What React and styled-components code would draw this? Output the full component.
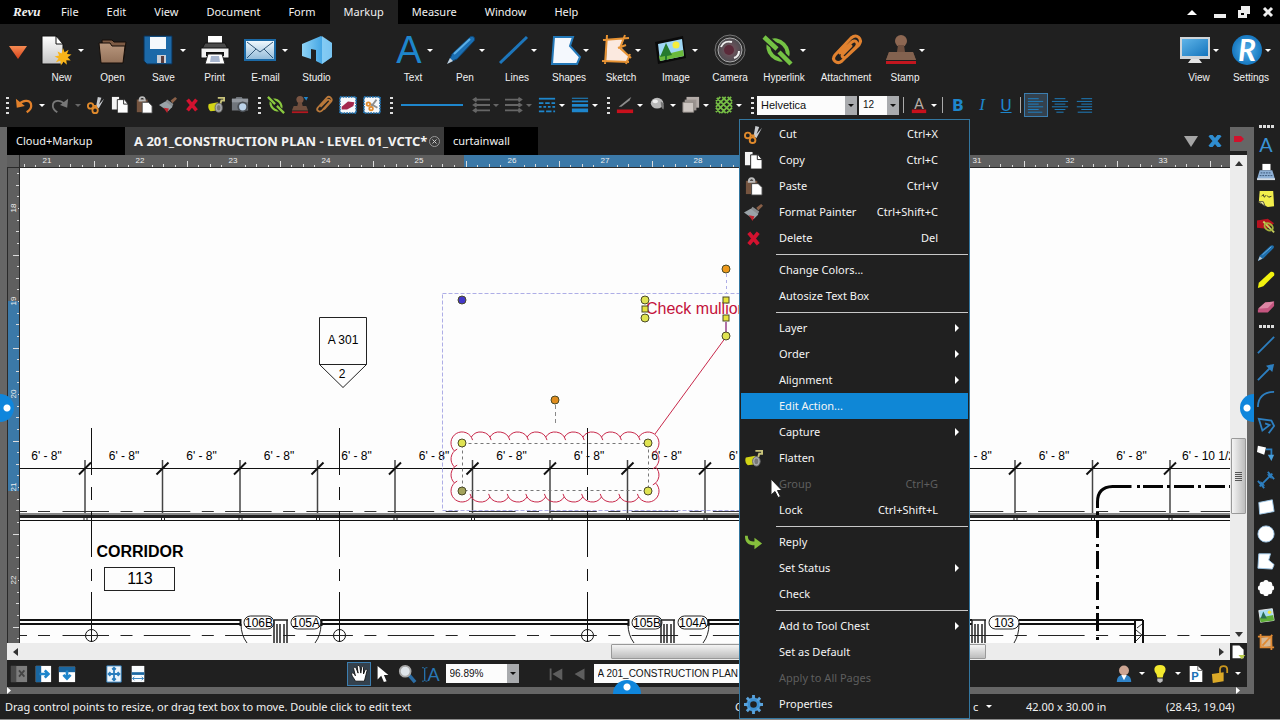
import React from 'react';
import styled, { createGlobalStyle, css } from 'styled-components';

const BLUE = '#1e86cc';
const DARK = '#202020';
const RAIL = '#666666';

/* ---------- large toolbar icons, 32 x 32 ---------- */

const bigIcons = {
  new: (
    <>
      <path d="M2 2h15l6 8v20H2z" fill="url(#paper)" stroke="#111" />
      <path d="M16 2v8h7z" fill="#fff" stroke="#111" />
      <path d="M23 14l1.6 4.2 4-2.4-1.6 4.2 4.5.6-3.8 2.6 3 3.4-4.4-.4.6 4.6-3.4-3-2.6 3.6-.6-4.6-4.4 1.4 2.6-3.8-4-2 4.6-.8-1.6-4.2 4 2.2z" fill="#f9b418" />
    </>
  ),
  open: (
    <>
      <path d="M5 6h10l2 2h12l-3 20H6z" fill="#7d5b44" stroke="#140d08" />
      <path d="M2 9h11l2 3h13l-2 17H4z" fill="url(#folder)" stroke="#140d08" />
    </>
  ),
  save: (
    <>
      <path d="M2 2h28v28H5l-3-3z" fill="#1c69a8" stroke="#0b2f50" />
      <path d="M8 3h16v12H8z" fill="#f4f8fc" />
      <path d="M9 21h15v8H9z" fill="#c9ced6" />
      <path d="M19 22h3v7h-3z" fill="#5a3c3c" />
      <path d="M9 21h6v8H9z" fill="#1c69a8" />
    </>
  ),
  print: (
    <>
      <path d="M9 2h14v8H9z" fill="#fff" />
      <path d="M6 9h20l3 6H3z" fill="#4b4b4b" stroke="#111" />
      <path d="M2 14h28v10H2z" fill="#f2f2f2" stroke="#111" />
      <path d="M7 18h18v4H7z" fill="#111" />
      <path d="M9 20h14l3 10H6z" fill="#fff" stroke="#222" />
      <path d="M12 22h8l1 6h-10z" fill="#a8b6cf" />
    </>
  ),
  email: (
    <>
      <path d="M1 6h30v20H1z" fill="url(#mail)" stroke="#1c6aa6" strokeWidth="2" />
      <path d="M3 8l13 10L29 8M3 24l9-9M29 24l-9-9" fill="none" stroke="#33597a" />
    </>
  ),
  studio: (
    <>
      <path d="M1 10L20 2l11 7v14l-10 7-6-3V16l-5-1v10l-9-3z" fill="url(#sky)" />
      <path d="M21 2l10 7v14l-10 7z" fill="#9fdcfb" opacity=".7" />
    </>
  ),
  text: (
    <text x="16" y="29" textAnchor="middle" fontFamily="Liberation Sans, Arial, sans-serif" fontSize="38" fill={BLUE}>A</text>
  ),
  pen: (
    <>
      <path d="M3 29l4-9L25 3c3-2 6 1 4 4L12 25z" fill="#1b6fb3" stroke="#0d4471" />
      <path d="M9 20L25 5" stroke="#5aaee6" strokeWidth="2" />
      <path d="M2 30l3-6 3 3z" fill="#c9d3dc" />
    </>
  ),
  lines: <path d="M3 29L30 3" stroke="#1d76bb" strokeWidth="3" />,
  shapes: <path d="M5 3h19l-3 9 10 11-3 7H3z" fill="#f4f8fd" stroke="#2378b8" strokeWidth="2" />,
  sketch: (
    <>
      <path d="M6 5h17l-3 8 8 9-3 6H5z" fill="#fbe9df" />
      <path d="M2 6l26-2M6 1l-2 29M1 27l27 1M24 1l-5 13 11 10M29 20l-4 10M17 14l8-3" fill="none" stroke="#e79334" strokeWidth="2" />
    </>
  ),
  image: (
    <>
      <path d="M1 8l28-6 3 22-28 6z" fill="#0a0a0a" />
      <path d="M4 10l24-5 2 17-24 5z" fill="#9fd7f5" />
      <path d="M5 22l24-6 1 6-24 5z" fill="#6ab93c" />
      <circle cx="22" cy="11" r="3.5" fill="#f5ee3c" />
      <path d="M12 9l6 12-5 1v4h-2v-4l-5 1z" fill="#257a2e" />
    </>
  ),
  camera: (
    <>
      <circle cx="16" cy="16" r="15" fill="#2b2b2b" stroke="#777" />
      <circle cx="16" cy="16" r="12" fill="url(#lens)" stroke="#aaa" />
      <circle cx="15" cy="16" r="5" fill="#5b2a3a" />
      <path d="M7 13c2-5 7-6 11-5M20 24c3-1 5-4 5-7" fill="none" stroke="#eee" strokeWidth="2" />
    </>
  ),
  hyperlink: (
    <g fill="none" stroke="#74c244">
      <ellipse cx="16" cy="16" rx="11" ry="8" transform="rotate(45 16 16)" strokeWidth="4" />
      <path d="M2 3l14 12M16 17l13 13" stroke={DARK} strokeWidth="8" />
      <path d="M2 3l13 12M17 18l12 12" strokeWidth="4.5" />
    </g>
  ),
  attachment: (
    <g fill="none" stroke="#e0812f" strokeWidth="3" strokeLinecap="round">
      <path d="M10 19L22 8c4-3 7 2 4 5L12 27c-5 4-11-1-7-6L21 4c6-5 12 1 8 7L16 23c-3 2-5-1-3-3l8-8" />
    </g>
  ),
  stamp: (
    <>
      <circle cx="16" cy="7" r="6" fill="#8d6752" />
      <path d="M13 11h6l1 7h8l3 8H1l3-8h8z" fill="#6f5040" />
      <path d="M4 18h24l3 8H1z" fill="#83624f" />
      <path d="M1 27h30v3H1z" fill="#c3161f" />
    </>
  ),
  view: (
    <>
      <path d="M1 3h30v22H1z" fill="#cfd4d8" />
      <path d="M3 5h26v17H3z" fill="url(#screen)" />
      <path d="M12 25h8l3 4H9z" fill="#e4e4e4" />
    </>
  ),
  settings: (
    <>
      <circle cx="16" cy="16" r="15" fill="url(#ball)" />
      <text x="16" y="27" textAnchor="middle" fontFamily="Lato, sans-serif" fontStyle="italic" fontWeight="700" fontSize="30" fill="#fff">R</text>
    </>
  ),
};

/* ---------- small icons, 20 x 20 ---------- */

const picture = (
  <>
    <path d="M2 5l15-2 2 13-15 2z" fill="#a9dcf2" stroke="#eee" />
    <path d="M3 13l15-3 1 6-15 2z" fill="#5fae38" />
    <circle cx="14" cy="7" r="2" fill="#f3e93c" />
    <path d="M7 6l4 8H4z" fill="#2c6f53" />
  </>
);

const icons = {
  undo: (
    <>
      <path d="M5 9c4-5 13-5 13 2 0 3-2 5-5 7" fill="none" stroke="#e2812b" strokeWidth="2.5" />
      <path d="M1 3l1 10 9-2z" fill="#e2812b" />
    </>
  ),
  redo: (
    <>
      <path d="M15 9C11 4 2 4 2 11c0 3 2 5 5 7" fill="none" stroke="#777" strokeWidth="2" />
      <path d="M19 3l-1 10-8-3z" fill="#777" />
    </>
  ),
  cut: (
    <>
      <path d="M12 1l-2 11 2 1 4-11zM19 3l-8 9 2 2z" fill="#c9ccd0" />
      <circle cx="4" cy="11" r="3" fill="none" stroke="#e08a2c" strokeWidth="2" />
      <circle cx="9" cy="16" r="3" fill="none" stroke="#e08a2c" strokeWidth="2" />
      <path d="M7 11l4 0M9 13l2-2" stroke="#e08a2c" strokeWidth="2" />
    </>
  ),
  copy: (
    <>
      <path d="M1 1h8v14H1z" fill="#f4f4f4" />
      <path d="M7 4h8l4 5v10H7z" fill="#fff" stroke="#222" />
      <path d="M14 4v5h5" fill="none" stroke="#222" />
    </>
  ),
  paste: (
    <>
      <path d="M2 4h12v14H2z" fill="#75543f" />
      <path d="M5 5c0-5 6-5 6 0z" fill="none" stroke="#bbb" strokeWidth="2" />
      <path d="M8 7h7l4 4v8H8z" fill="#fff" stroke="#444" />
    </>
  ),
  painter: (
    <>
      <path d="M13 5l5-4 2 2-5 5z" fill="#8a6048" />
      <path d="M9 4l7 5-2 4-8-5z" fill="#8b8f92" />
      <path d="M7 6l8 6-5 5L0 10z" fill="#9aa3a8" />
      <path d="M5 13l6 1-2 5z" fill="#c0252f" />
    </>
  ),
  del: <path d="M5 4l10 12M15 4L5 16" stroke="#d3122f" strokeWidth="4" />,
  flatten: (
    <>
      <path d="M12 2h7v3h-3l-2 7" fill="none" stroke="#c8c37a" strokeWidth="2" />
      <path d="M2 9l10-2v9l-8 1c-3-2-3-6-2-8z" fill="#d2d416" />
      <ellipse cx="13" cy="13" rx="4" ry="5" fill="#a9abae" stroke="#666" />
      <ellipse cx="13" cy="13" rx="2" ry="3" fill="#777" />
    </>
  ),
  snapshot: (
    <>
      <path d="M1 3h4l1-2h6l1 2h6v13H1z" fill="#70757b" />
      <path d="M1 3h18v4H1z" fill="#9499a0" />
      <circle cx="13" cy="12" r="5" fill="#bcd3ea" stroke="#4a4f55" strokeWidth="2" />
    </>
  ),
  link: (
    <g fill="none" stroke="#8ac93f">
      <ellipse cx="10" cy="10" rx="7" ry="5" transform="rotate(45 10 10)" strokeWidth="2.5" />
      <path d="M1 1l9 8M10 11l9 8" stroke={DARK} strokeWidth="5" />
      <path d="M1 1l8 8M11 11l8 8" strokeWidth="2.5" />
    </g>
  ),
  stampSmall: (
    <>
      <circle cx="10" cy="4" r="4" fill="#7a5543" />
      <path d="M8 7h4l1 4h4l2 5H1l2-5h4z" fill="#6f4e3d" />
      <path d="M1 17h18v2H1z" fill="#b31820" />
      <path d="M14 1h5l-2 4z" fill={BLUE} />
    </>
  ),
  clip: <path d="M6 12l7-7c2-2 5 0 3 2l-8 9c-3 3-7 0-5-3L13 2c3-3 7 1 5 4l-8 9" fill="none" stroke="#b9783a" strokeWidth="2" />,
  eraseSnap: (
    <>
      <path d="M1 1h18v18H1z" fill="#f6f8fa" stroke="#1d6aa5" strokeWidth="2" strokeDasharray="2 1" />
      <path d="M3 12l7-6 7 1-1 4-7 4-6 0z" fill="#a3274c" />
    </>
  ),
  cutSnap: (
    <>
      <path d="M1 1h18v18H1z" fill="#f6f8fa" stroke="#1d6aa5" strokeWidth="2" strokeDasharray="2 1" />
      <path d="M9 12l6-8M9 9l7 4" stroke="#8d8d8d" strokeWidth="2" />
      <circle cx="6" cy="9" r="2" fill="none" stroke="#e08a2c" strokeWidth="2" />
      <circle cx="9" cy="14" r="2" fill="none" stroke="#e08a2c" strokeWidth="2" />
    </>
  ),
  lineStart: <path d="M2 4h18M2 10h18M2 16h18M5 2L2 4l3 2M5 8l-3 2 3 2M5 14l-3 2 3 2" fill="none" stroke="#666" strokeWidth="2" />,
  lineEnd: <path d="M0 4h18M0 10h18M0 16h18M15 2l3 2-3 2M15 8l3 2-3 2M15 14l3 2-3 2" fill="none" stroke="#666" strokeWidth="2" />,
  dash: (
    <g stroke={BLUE} fill="none">
      <path d="M1 3h18" strokeWidth="2" />
      <path d="M1 8h18" strokeWidth="2" strokeDasharray="5 2" />
      <path d="M1 12h18" strokeWidth="2" strokeDasharray="3 2" />
      <path d="M1 17h18" strokeWidth="2" strokeDasharray="6 2" />
    </g>
  ),
  weight: (
    <g fill={BLUE}>
      <path d="M1 2h18v1H1zM1 5h18v2H1zM1 9h18v3H1zM1 14h18v4H1z" />
    </g>
  ),
  lineColor: (
    <>
      <path d="M3 12L14 3l3-2-2 4-9 7z" fill="#8c8c8c" />
      <path d="M1 15h18v4H1z" fill="#c8101c" />
    </>
  ),
  fill: (
    <>
      <ellipse cx="9" cy="8" rx="7" ry="6" fill="#b9b9b9" />
      <ellipse cx="7" cy="6" rx="3" ry="2" fill="#eee" />
      <path d="M13 6c4 1 4 6 3 9-2-1-3-4-3-9z" fill="#777" />
    </>
  ),
  opacity: (
    <>
      <path d="M5 1h14v12H5z" fill="#b4aca8" />
      <path d="M3 4h13v12H3z" fill="#9c9490" />
      <path d="M1 7h12v11H1z" fill="#cdc6c2" stroke="#8b8480" />
    </>
  ),
  hatch: <path d="M1 6l5-5M1 12L12 1M1 18L18 1M7 19L19 7M13 19l6-6M14 1l5 5M8 1l11 11M2 2l16 16M1 7l11 12M1 13l5 6" stroke="#76bd45" strokeWidth="2" />,
  fontColor: (
    <>
      <text x="10" y="14" textAnchor="middle" fontFamily="Roboto, sans-serif" fontSize="17" fill="#b9aea6">A</text>
      <path d="M2 15h16v4H2z" fill="#c8101c" />
    </>
  ),
  alignL: <path d="M1 3h12M1 6h17M1 9h12M1 12h17M1 15h12M1 18h16" stroke={BLUE} />,
  alignC: <path d="M4 3h12M1 6h18M4 9h12M1 12h18M4 15h12M6 18h8" stroke={BLUE} />,
  alignR: <path d="M7 3h12M2 6h17M7 9h12M2 12h17M7 15h12M3 18h16" stroke={BLUE} />,
  reply: <path d="M1 3h3c0 5 3 6 7 6V5l8 6-8 6v-4C5 13 1 11 1 3z" fill="#86bf3c" />,
  gear: (
    <>
      <circle cx="10" cy="10" r="5.5" fill="none" stroke="#3d8fd0" strokeWidth="4" />
      <path d="M10 0v4M10 16v4M0 10h4M16 10h4M3 3l3 3M14 14l3 3M3 17l3-3M14 6l3-3" stroke="#5aa3dc" strokeWidth="3" />
    </>
  ),
  letterA: <text x="10" y="18" textAnchor="middle" fontFamily="Lato, sans-serif" fontSize="22" fill="#3a92d6">A</text>,
  typewriter: (
    <>
      <path d="M6 1h9v7H6z" fill="#fff" />
      <path d="M3 8h14l3 10H0z" fill="#8fb1d6" />
      <path d="M4 11h12M3 14h14" stroke="#34506f" strokeDasharray="2 1" />
      <path d="M0 17h20v2H0z" fill="#d3dbe4" />
    </>
  ),
  note: (
    <>
      <path d="M3 1h15l1 17-7 1-10-5z" fill="#f2ee4c" />
      <path d="M2 13l5 0 2 5z" fill="#fffba4" stroke="#444" />
      <path d="M5 7l2-2 1 3 2-2M11 6l2 2 3-1" fill="none" stroke="#222" />
    </>
  ),
  redLink: (
    <>
      <path d="M0 4l12-2 7 5-8 6-11-1z" fill="#b81220" />
      <path d="M7 5l12 12" stroke="#c8d060" strokeWidth="2" />
      <ellipse cx="13" cy="11" rx="5" ry="3.5" transform="rotate(35 13 11)" fill="none" stroke="#a5b23a" strokeWidth="2" />
    </>
  ),
  penSmall: (
    <>
      <path d="M1 19l2-6L15 2c3-2 5 1 3 3L7 16z" fill="#1f6fad" />
      <path d="M6 12L16 3" stroke="#6fb6e6" />
      <path d="M1 19l2-5 3 2z" fill="#b8c4cc" />
    </>
  ),
  highlighter: <path d="M1 19l1-6L15 1c3-1 5 1 4 4L7 17z" fill="#f2f20f" />,
  eraser: (
    <>
      <path d="M1 13l8-8 10-1v5l-7 7H1z" fill="#c4557f" />
      <path d="M1 12l8-7 10-1-7 7z" fill="#dd86a4" />
    </>
  ),
  line: <path d="M1 19L19 1" stroke="#2d7fc0" strokeWidth="2" />,
  arrow: (
    <>
      <path d="M1 19L15 5" stroke="#2d7fc0" strokeWidth="2" />
      <path d="M19 1l-2 9-7-7z" fill="#2d7fc0" />
    </>
  ),
  arc: <path d="M1 19C1 8 8 2 19 2" fill="none" stroke="#2d7fc0" strokeWidth="2" />,
  polyline: <path d="M13 18l6-8-3-6L2 2l4 13 8-6-5-2" fill="none" stroke="#2d7fc0" strokeWidth="2" />,
  callout: (
    <>
      <path d="M1 2l9 2-2 8-8-3z" fill="#fff" />
      <path d="M10 6h6v8" fill="none" stroke="#2d7fc0" strokeWidth="2" />
      <path d="M12 12h7l-3 7z" fill="#4aa0dc" />
    </>
  ),
  dimension: (
    <>
      <path d="M3 17L17 3M1 11l7 8M12 1l7 8" stroke="#2d7fc0" strokeWidth="2" />
      <path d="M3 17l1-6 5 5zM17 3l-1 6-5-5z" fill="#2d7fc0" />
    </>
  ),
  rect: <path d="M2 5l15-3 2 13-16 3z" fill="#fff" stroke="#9cc6e8" />,
  circle: <circle cx="10" cy="10" r="9" fill="#fff" stroke="#9cc6e8" />,
  polygon: <path d="M2 2h13l-2 7 6 5-2 5-16-1z" fill="#fff" stroke="#9cc6e8" />,
  cloud: (
    <g fill="#fff">
      <circle cx="10" cy="10" r="6" />
      <circle cx="10" cy="4" r="3" />
      <circle cx="10" cy="16" r="3" />
      <circle cx="4" cy="10" r="3" />
      <circle cx="16" cy="10" r="3" />
      <circle cx="6" cy="6" r="3" />
      <circle cx="14" cy="6" r="3" />
      <circle cx="6" cy="14" r="3" />
      <circle cx="14" cy="14" r="3" />
    </g>
  ),
  picture,
  crop: (
    <>
      <path d="M4 5l12-1 1 11-13 1z" fill="#d6b894" />
      <path d="M4 1v15h15M1 4h15v15M6 14L17 2" fill="none" stroke="#e08a34" strokeWidth="2" />
    </>
  ),
  closePane: (
    <>
      <path d="M1 1h18v18H1z" fill="#7d7d7d" />
      <path d="M1 1h6v18H1z" fill="#4b4b4b" />
      <path d="M10 6l6 7M16 6l-6 7" stroke="#444" strokeWidth="2" />
    </>
  ),
  splitV: (
    <>
      <path d="M2 1h17v18H2z" fill="#fff" />
      <path d="M2 1h6v18H2z" fill="#1a66a0" />
      <path d="M6 10h9M12 6l4 4-4 4" fill="none" stroke={BLUE} strokeWidth="3" />
    </>
  ),
  splitH: (
    <>
      <path d="M1 2h18v17H1z" fill="#fff" />
      <path d="M1 2h18v6H1z" fill="#1a66a0" />
      <path d="M10 6v8M6 11l4 4 4-4" fill="none" stroke={BLUE} strokeWidth="3" />
    </>
  ),
  fitPage: (
    <>
      <path d="M2 1h16v18H2z" fill="#eef5fb" stroke="#2a7dbd" />
      <path d="M10 3v14M4 10h12M8 5l2-2 2 2M8 15l2 2 2-2M6 8l-2 2 2 2M14 8l2 2-2 2" fill="none" stroke="#2a7dbd" strokeWidth="2" />
    </>
  ),
  fitWidth: (
    <>
      <path d="M3 1h14v18H3z" fill="#f8fbfd" />
      <path d="M3 8h14v3H3z" fill="#1a66a0" />
      <path d="M4 15h12M6 13l-2 2 2 2M14 13l2 2-2 2" fill="none" stroke="#2a7dbd" />
    </>
  ),
  hand: (
    <path d="M6 18C4 14 1 11 2 9c1-1 3 1 4 3L4 4c0-2 2-2 3 0l2 5-1-7c0-2 2-2 3 0l1 7 1-6c0-2 2-2 2 0v7l2-5c1-1 2 0 2 1l-3 12z" fill="#fff" stroke="#111" />
  ),
  pointer: <path d="M4 1v15l4-4 3 7 3-1-3-7h5z" fill="#fff" />,
  magnifier: (
    <>
      <path d="M12 11l7 8" stroke="#2b6da5" strokeWidth="4" />
      <circle cx="8" cy="7" r="6" fill="#dfe5ea" stroke="#a9a9a9" strokeWidth="2" />
    </>
  ),
  textSelect: (
    <>
      <path d="M0 3c2 0 3 0 3 2v11c0 2-1 2-3 2M6 3C4 3 3 3 3 5v11c0 2 1 2 3 2" fill="none" stroke="#2878b6" />
      <text x="13" y="18" textAnchor="middle" fontFamily="Lato, sans-serif" fontSize="20" fill="#2878b6">A</text>
    </>
  ),
  first: <path d="M3 4h2v13H3zM17 4v13L6 10z" fill="#5e5e5e" />,
  prev: <path d="M15 4v13L4 10z" fill="#5e5e5e" />,
  next: <path d="M5 4v13l11-7z" fill="#5e5e5e" />,
  last: <path d="M15 4h2v13h-2zM3 4v13l11-7z" fill="#5e5e5e" />,
  person: (
    <>
      <path d="M2 19c0-6 3-8 8-8s8 2 8 8z" fill="#2f83c8" />
      <path d="M7 11h6l-3 6z" fill="#fff" />
      <circle cx="10" cy="6" r="5.5" fill="#cda593" />
    </>
  ),
  bulb: (
    <>
      <path d="M10 0c8 0 7 7 4 10l-1 4H7l-1-4C3 7 2 0 10 0z" fill="#f3e92e" />
      <path d="M7 15h6v3l-3 2-3-2z" fill="#bdbdbd" />
    </>
  ),
  pDoc: (
    <>
      <path d="M3 1h9l5 5v13H3z" fill="#fff" />
      <path d="M12 1v5h5" fill="none" stroke="#555" />
      <text x="9" y="17" textAnchor="middle" fontFamily="Roboto, sans-serif" fontWeight="700" fontSize="13" fill="#1d73b8">P</text>
    </>
  ),
  lock: (
    <>
      <path d="M10 9V5c0-5 8-5 8 0v4" fill="none" stroke="#c9961e" strokeWidth="2" />
      <path d="M1 10l13-2v10L2 20z" fill="#dba927" />
    </>
  ),
  pageNote: (
    <>
      <path d="M3 3h8l5 5v10H3z" fill="#fff" />
      <path d="M10 14h8l-4 5z" fill="#b9cc4a" />
    </>
  ),
};

const Icon = ({ name, size = 20 }) => (
  <Svg width={size} height={size} viewBox="0 0 20 20" aria-hidden="true">
    {icons[name]}
  </Svg>
);

const Gradients = () => (
  <HiddenSvg width="0" height="0" aria-hidden="true">
    <linearGradient id="paper" x1="0" y1="0" x2="0" y2="1"><stop stopColor="#fff" /><stop offset="1" stopColor="#c4c4c4" /></linearGradient>
    <linearGradient id="folder" x1="0" y1="0" x2="0" y2="1"><stop stopColor="#b9987e" /><stop offset="1" stopColor="#94725a" /></linearGradient>
    <linearGradient id="mail" x1="0" y1="0" x2="0" y2="1"><stop stopColor="#f4fbff" /><stop offset="1" stopColor="#8fb9d8" /></linearGradient>
    <linearGradient id="sky"><stop stopColor="#8fd4f7" /><stop offset="1" stopColor="#1f8fdb" /></linearGradient>
    <linearGradient id="screen" x1="0" y1="0" x2="1" y2="1"><stop stopColor="#5fb4e8" /><stop offset="1" stopColor="#1475bd" /></linearGradient>
    <radialGradient id="ball"><stop stopColor="#53b0ea" /><stop offset="1" stopColor="#1677bf" /></radialGradient>
    <radialGradient id="lens"><stop stopColor="#7b5560" /><stop offset="1" stopColor="#4c4c50" /></radialGradient>
    <linearGradient id="flame" x1="0" y1="0" x2="0" y2="1"><stop stopColor="#f58a52" /><stop offset="1" stopColor="#d6421a" /></linearGradient>
  </HiddenSvg>
);

/* ---------- data ---------- */

const menus = ['File', 'Edit', 'View', 'Document', 'Form', 'Markup', 'Measure', 'Window', 'Help'];

const fileTools = [
  { icon: 'new', label: 'New', arrow: true, gap: 6 },
  { icon: 'open', label: 'Open' },
  { icon: 'save', label: 'Save', arrow: true, gap: 6 },
  { icon: 'print', label: 'Print' },
  { icon: 'email', label: 'E-mail', arrow: true, gap: 6 },
  { icon: 'studio', label: 'Studio' },
];

const markupTools = [
  { icon: 'text', label: 'Text', arrow: true, width: 52 },
  { icon: 'pen', label: 'Pen', arrow: true, width: 52 },
  { icon: 'lines', label: 'Lines', arrow: true, width: 52 },
  { icon: 'shapes', label: 'Shapes', arrow: true, width: 52 },
  { icon: 'sketch', label: 'Sketch', arrow: true, width: 52 },
  { icon: 'image', label: 'Image', arrow: true, gap: 6, width: 58 },
  { icon: 'camera', label: 'Camera', width: 50 },
  { icon: 'hyperlink', label: 'Hyperlink', arrow: true, gap: 6, width: 58 },
  { icon: 'attachment', label: 'Attachment', width: 66 },
  { icon: 'stamp', label: 'Stamp', arrow: true, width: 52 },
];

const appTools = [
  { icon: 'view', label: 'View', arrow: true, width: 52 },
  { icon: 'settings', label: 'Settings', arrow: true, width: 52 },
];

const sideTools = [
  ['letterA', 'typewriter', 'note', 'redLink', 'penSmall', 'highlighter', 'eraser'],
  ['line', 'arrow', 'arc', 'polyline', 'callout', 'dimension', 'rect', 'circle', 'polygon', 'cloud', 'picture', 'crop'],
];

const contextMenu = [
  [
    { label: 'Cut', keys: 'Ctrl+X', icon: 'cut' },
    { label: 'Copy', keys: 'Ctrl+C', icon: 'copy' },
    { label: 'Paste', keys: 'Ctrl+V', icon: 'paste' },
    { label: 'Format Painter', keys: 'Ctrl+Shift+C', icon: 'painter' },
    { label: 'Delete', keys: 'Del', icon: 'del' },
  ],
  [{ label: 'Change Colors...' }, { label: 'Autosize Text Box' }],
  [
    { label: 'Layer', sub: true },
    { label: 'Order', sub: true },
    { label: 'Alignment', sub: true },
    { label: 'Edit Action...', active: true },
    { label: 'Capture', sub: true },
    { label: 'Flatten', icon: 'flatten' },
    { label: 'Group', keys: 'Ctrl+G', disabled: true },
    { label: 'Lock', keys: 'Ctrl+Shift+L' },
  ],
  [{ label: 'Reply', icon: 'reply' }, { label: 'Set Status', sub: true }, { label: 'Check' }],
  [
    { label: 'Add to Tool Chest', sub: true },
    { label: 'Set as Default' },
    { label: 'Apply to All Pages', disabled: true },
    { label: 'Properties', icon: 'gear' },
  ],
];

/* ---------- rulers ---------- */

const INCH = 93;
const tickLength = (i) => (i % 4 === 0 ? 6 : i % 2 === 0 ? 3 : 2);

const TopRuler = () => (
  <TopRulerSvg aria-hidden="true">
    <rect x="457" width="300" height="12" fill="#3b79a8" />
    {Array.from({ length: 200 }, (_, i) => {
      const x = Math.round(40 + ((i - 2) * INCH) / 8);
      return (i - 2) % 8 !== 0 && x > 13 && <path key={i} d={`M${x}.5 12v-${tickLength(i - 2)}`} stroke="#ddd" />;
    })}
    {Array.from({ length: 13 }, (_, i) => (
      <text key={i} x={40 + i * INCH} y="8" textAnchor="middle">{21 + i}</text>
    ))}
    <path d="M12.5 0v13M0 12.5h4000" stroke="#2a2a2a" />
  </TopRulerSvg>
);

const LeftRuler = () => (
  <LeftRulerSvg aria-hidden="true">
    <rect y="133" width="12" height="190" fill="#3b79a8" />
    {Array.from({ length: 120 }, (_, i) => {
      const y = Math.round(40 + ((i - 3) * INCH) / 8);
      return <path key={i} d={`M12 ${y}.5h-${(i - 3) % 8 === 0 ? 1 : tickLength(i - 3)}`} stroke="#ddd" />;
    })}
    {Array.from({ length: 5 }, (_, i) => (
      <text key={i} transform={`translate(9 ${40 + i * INCH}) rotate(-90)`} textAnchor="middle">{18 + i}</text>
    ))}
    <path d="M.5 0v4000M12.5 0v4000" stroke="#2a2a2a" />
  </LeftRulerSvg>
);

/* ---------- drawing ---------- */

const BAY = 77.5;
const bays = Array.from({ length: 15 }, (_, i) => i);

// Points of the revision cloud, clockwise around its rectangle.
const cloudPoints = () => {
  const [l, t, r, b] = [462, 443, 648, 491];
  const pts = [];
  for (let i = 0; i < 10; i++) pts.push([l + ((r - l) * i) / 10, t]);
  for (let i = 0; i < 3; i++) pts.push([r, t + ((b - t) * i) / 3]);
  for (let i = 0; i < 10; i++) pts.push([r - ((r - l) * i) / 10, b]);
  for (let i = 0; i < 3; i++) pts.push([l, b - ((b - t) * i) / 3]);
  return pts;
};

const cloudPath = () => {
  const R = 11;
  const pts = cloudPoints();
  return pts
    .map(([x, y], i) => {
      const p = pts[(i + pts.length - 1) % pts.length];
      const n = pts[(i + 1) % pts.length];
      const half = (q) => Math.acos(Math.hypot(q[0] - x, q[1] - y) / 2 / R);
      const start = Math.atan2(p[1] - y, p[0] - x) + half(p);
      const end = Math.atan2(n[1] - y, n[0] - x) - half(n) + 0.3;
      const sweep = (end - start + Math.PI * 4) % (Math.PI * 2);
      const at = (a) => `${(x + R * Math.cos(a)).toFixed(1)} ${(y + R * Math.sin(a)).toFixed(1)}`;
      return `M${at(start)}A${R} ${R} 0 ${sweep > Math.PI ? 1 : 0} 1 ${at(end)}`;
    })
    .join('');
};

const RoomTag = ({ x, label }) => (
  <>
    <rect x={x - 15} y="616" width="30" height="13" rx="6.5" fill="none" stroke="#222" />
    <text x={x} y="627" textAnchor="middle" fontSize="12">{label}</text>
  </>
);

const Jamb = ({ x }) => (
  <path d={`M${x} 620h14M${x} 620v24M${x + 3} 624v20M${x + 6} 624v20M${x + 10} 624v20M${x + 13} 620v24`} fill="none" stroke="#222" strokeWidth="1.5" />
);

const Dot = ({ x, y, color = '#dfe352' }) => <circle cx={x} cy={y} r="4" fill={color} stroke="#4a4a28" />;
const Square = ({ x, y }) => <rect x={x - 3} y={y - 3} width="6" height="6" fill="#e6e23c" stroke="#4a4a28" />;

const Plan = () => (
  <PlanSvg aria-label="Construction plan, level 01">
    <g transform="translate(-20 -168)">
      {/* dimension string */}
      <path d="M20 468.5H2400" stroke="#111" />
      {bays.map((i) => {
        const x = 85 + i * BAY;
        return (
          <g key={i}>
            <path d={`M${x} 460v53`} stroke="#444" strokeWidth="1.5" />
            <path d={`M${x - 6} 474.5l12-12`} stroke="#111" strokeWidth="2" />
            <path d={`M${x - 1} 517v4M${x + 2} 517v4`} stroke="#222" />
            <text x={46.5 + i * BAY} y="460" textAnchor="middle" fontSize="12">6' - 8"</text>
          </g>
        );
      })}
      <text x="1182" y="460" fontSize="12">6' - 10 1/2"</text>

      {/* exterior wall */}
      <path d="M62.5 511.5H2400" stroke="#333" strokeDasharray="46.5 11.5 12 11.3" />
      <path d="M20 511.5h7M38 511.5h12" stroke="#333" />
      <path d="M20 514H2400" stroke="#888" strokeWidth="2" />
      <path d="M20 516.5H2400" stroke="#222" strokeWidth="3" />
      <path d="M20 520.5H2400" stroke="#111" />

      {/* grid lines */}
      {[91.5, 339.5, 587.5].map((x) => (
        <g key={x} fill="none" stroke="#111">
          <path d={`M${x} 428v47M${x} 487v13M${x} 511v46M${x} 569v12M${x} 592v50`} />
          <circle cx={x} cy="635.5" r="6" />
        </g>
      ))}
      <path d="M62.5 635.5H2400" stroke="#222" strokeDasharray="46.5 11.5 12 11.3" />
      <path d="M20 635.5h7M38 635.5h12" stroke="#222" />

      {/* corridor wall and doors */}
      <path d="M20 620h220M20 624h220M322 620h306M322 624h306M709 620h263M709 624h263M1019 620h124M1019 624h116" stroke="#111" strokeWidth="2" />
      <path d="M240.5 619v7M321.5 619v7M628.5 619v7M708.5 619v7M1135 620v24M1143 620v24" stroke="#111" strokeWidth="2" />
      <path d="M1136 630l6 5-6 6M1137 628l5-4" fill="none" stroke="#333" />
      <path d="M241 624q0 11 6 19M321 624q0 11-6 19M628 624q0 11 6 19M709 624q0 11-6 19M1019 624q0 11-5 19" fill="none" stroke="#222" />
      <RoomTag x={259} label="106B" />
      <RoomTag x={306} label="105A" />
      <RoomTag x={647} label="105B" />
      <RoomTag x={693} label="104A" />
      <RoomTag x={1004} label="103" />
      <Jamb x={274} />
      <Jamb x={661} />
      <Jamb x={972} />

      {/* section marker and room name */}
      <path d="M319.5 317.5h47v47h-47zM319.5 364.5l23.5 23 23.5-23" fill="none" stroke="#222" />
      <text x="343" y="344" textAnchor="middle" fontSize="12">A 301</text>
      <text x="342" y="378" textAnchor="middle" fontSize="12">2</text>
      <text x="140" y="557" textAnchor="middle" fontSize="16" fontWeight="700">CORRIDOR</text>
      <rect x="104.5" y="567.5" width="70" height="23" fill="none" stroke="#222" />
      <text x="140" y="584" textAnchor="middle" fontSize="16">113</text>

      {/* roof edge above */}
      <g fill="none" stroke="#050505" strokeWidth="3">
        <path d="M1097.5 508v-6q0-15 15-15.5h19M1097.5 512v3M1137 486.5h3" />
        <path d="M1097.5 520V644" strokeDasharray="18 6 3 4" />
        <path d="M1143 486.5H2400" strokeDasharray="20 4 3 4" />
      </g>

      {/* markups */}
      <path d="M442.5 293.5H960v217H442.5z" fill="none" stroke="#aeaee6" strokeDasharray="4 2" />
      <path d="M462.5 443.5h186v47h-186z" fill="none" stroke="#777" strokeDasharray="3 3" />
      <path d={cloudPath()} fill="none" stroke="#c8284a" />
      <path d="M555.5 405v18" stroke="#888" strokeDasharray="4 3" />
      <path d="M726.5 274v20" stroke="#aeaee6" strokeDasharray="3 3" />
      <path d="M655 434L726 337" stroke="#c8284a" />
      <path d="M726 322v12" stroke="#b070a8" strokeWidth="2" />
      <text x="646" y="314" fontSize="16" fill="#c3103a">Check mullion</text>
      <Dot x={462} y={300} color="#4338c8" />
      <Dot x={726} y={269} color="#ee9a1c" />
      <Dot x={555} y={400} color="#e08d1e" />
      <Dot x={645} y={300} />
      <Square x={645} y={309} />
      <Dot x={645} y={318} />
      <Square x={726} y={300} />
      <Square x={726} y={318} />
      <Dot x={726} y={336} />
      <Dot x={462} y={443} />
      <Dot x={648} y={443} />
      <Dot x={462} y={491} color="#a3a35c" />
      <Dot x={648} y={491} />
    </g>
  </PlanSvg>
);

/* ---------- parts ---------- */

const BigTool = ({ icon, label, arrow, gap = 2, width = 51 }) => (
  <BigButton $width={width}>
    <BigFace $gap={gap}>
      <Svg width="32" height="32" viewBox="0 0 32 32" aria-hidden="true">{bigIcons[icon]}</Svg>
      {arrow && <Caret />}
    </BigFace>
    {label}
  </BigButton>
);

const Tool = ({ name, label = name, ...rest }) => (
  <ToolButton aria-label={label} {...rest}>
    <Icon name={name} size={18} />
  </ToolButton>
);

const DropTool = ({ name, dim }) => (
  <DropButton aria-label={name}>
    <Icon name={name} size={18} />
    <Caret $dim={dim} />
  </DropButton>
);

const Combo = ({ label, value, width, size }) => (
  <ComboBox $width={width}>
    <ComboSelect aria-label={label} defaultValue={value} $size={size}>
      <option>{value}</option>
    </ComboSelect>
    <ComboArrow><Caret $dark /></ComboArrow>
  </ComboBox>
);

const ContextMenu = () => (
  <Menu role="menu">
    {contextMenu.map((group, g) => (
      <MenuGroup key={g} role="group">
        {group.map(({ label, keys, icon, sub, active, disabled }) => (
          <MenuItem key={label} role="menuitem" $active={active} disabled={disabled}>
            <MenuIcon>{icon && <Icon name={icon} size={19} />}</MenuIcon>
            <span>{label}</span>
            <Keys>{keys}</Keys>
            {sub && <SubArrow />}
          </MenuItem>
        ))}
      </MenuGroup>
    ))}
    <Cursor width="14" height="21" viewBox="0 0 14 21" aria-hidden="true">
      <path d="M1 1v16l4-3.5 3 6 2.5-1-3-6H12z" fill="#fff" stroke="#222" />
    </Cursor>
  </Menu>
);

export default () => {
  return (
    <Page>
      <GlobalStyle />
      <Gradients />
      <MenuBar>
        <Logo>Revu</Logo>
        {menus.map((m) => <MenuButton key={m} $active={m === 'Markup'}>{m}</MenuButton>)}
        <WindowButtons>
          <WindowButton aria-label="Collapse"><svg width="12" height="12"><path d="M1 9h10L6 4z" fill="#fff" /></svg></WindowButton>
          <WindowButton aria-label="Minimize"><svg width="12" height="12"><path d="M0 8h12v4H0z" fill="#eee" /></svg></WindowButton>
          <WindowButton aria-label="Restore"><svg width="12" height="12"><path d="M3 0h9v8H9v4H0V4h3zM3 7v2h3V7z" fill="#eee" fillRule="evenodd" /></svg></WindowButton>
          <WindowButton aria-label="Close"><svg width="12" height="12"><path d="M2 2l8 8M10 2l-8 8" stroke="#eee" strokeWidth="3" /></svg></WindowButton>
        </WindowButtons>
      </MenuBar>

      <BigBar>
        <ProfileButton aria-label="Profiles">
          <svg width="20" height="14"><path d="M1 0h18l-9 13z" fill="url(#flame)" /></svg>
        </ProfileButton>
        {fileTools.map((t) => <BigTool key={t.label} {...t} />)}
        <BigGroup>{markupTools.map((t) => <BigTool key={t.label} {...t} />)}</BigGroup>
        <BigGroup $end>{appTools.map((t) => <BigTool key={t.label} {...t} />)}</BigGroup>
      </BigBar>

      <SmallBar>
        <Grip />
        <Tool name="undo" /><CaretButton aria-label="Undo list"><Caret /></CaretButton>
        <Tool name="redo" /><CaretButton aria-label="Redo list"><Caret $dim /></CaretButton>
        {['cut', 'copy', 'paste', 'painter', 'del', 'flatten', 'snapshot'].map((n) => <Tool key={n} name={n} />)}
        <Grip />
        {['link', 'stampSmall', 'clip', 'eraseSnap', 'cutSnap'].map((n) => <Tool key={n} name={n} />)}
        <Grip />
        <LineSample aria-label="Line style" />
        <DropTool name="lineStart" dim />
        <DropTool name="lineEnd" dim />
        <DropTool name="dash" />
        <DropTool name="weight" />
        <Grip />
        <DropTool name="lineColor" />
        <DropTool name="fill" />
        <DropTool name="opacity" />
        <DropTool name="hatch" />
        <Grip />
        <Combo label="Font" value="Helvetica" width={100} size={11} />
        <Combo label="Font size" value="12" width={40} size={10} />
        <Divider />
        <DropTool name="fontColor" />
        <Divider />
        <ToolButton aria-label="Bold"><Letter $bold>B</Letter></ToolButton>
        <ToolButton aria-label="Italic"><Letter $italic>I</Letter></ToolButton>
        <ToolButton aria-label="Underline"><Letter $underline>U</Letter></ToolButton>
        <Divider />
        <Tool name="alignL" $active />
        <Tool name="alignC" />
        <Tool name="alignR" />
      </SmallBar>

      <Workspace>
        <Rail><PanelHandle $side="left" aria-label="Left panel" /></Rail>
        <DocPane>
          <TabBar>
            <Tab $width={118}>Cloud+Markup</Tab>
            <Tab $width={319} $active>
              A 201_CONSTRUCTION PLAN - LEVEL 01_VCTC*
              <Svg width="11" height="11" aria-hidden="true">
                <circle cx="5.5" cy="5.5" r="5" fill="none" stroke="#999" />
                <path d="M3.5 3.5l4 4M7.5 3.5l-4 4" stroke="#ccc" />
              </Svg>
            </Tab>
            <Tab $width={94}>curtainwall</Tab>
            <TabActions>
              <ToolButton aria-label="Tab list"><svg width="14" height="11"><path d="M0 0h14L7 11z" fill="#a5a5a5" /></svg></ToolButton>
              <ToolButton aria-label="Close tab"><svg width="14" height="12"><path d="M2 0l10 12M12 0L2 12" stroke="#2f8dd0" strokeWidth="4" /></svg></ToolButton>
              <FlagBox><svg width="12" height="8"><path d="M1 1h7l3 3-3 3H1z" fill="#d0112c" /></svg></FlagBox>
            </TabActions>
          </TabBar>
          <Sheet>
            <SheetMain>
              <TopRuler />
              <SheetRow>
                <LeftRuler />
                <Plan />
              </SheetRow>
            </SheetMain>
            <VScroll>
              <ScrollEnd aria-label="Scroll up"><svg width="8" height="5"><path d="M0 5h8L4 0z" fill="#333" /></svg></ScrollEnd>
              <Space $grow={270} />
              <Thumb $grow={75} $vertical><GripLines /></Thumb>
              <Space $grow={113} />
              <ScrollEnd aria-label="Scroll down"><svg width="8" height="5"><path d="M0 0h8L4 5z" fill="#333" /></svg></ScrollEnd>
            </VScroll>
          </Sheet>
          <HRow>
            <HScroll>
              <ScrollEnd aria-label="Scroll left"><svg width="5" height="8"><path d="M5 0v8L0 4z" fill="#333" /></svg></ScrollEnd>
              <Space $grow={587} />
              <Thumb $grow={374} />
              <Space $grow={226} />
              <ScrollEnd aria-label="Scroll right"><svg width="5" height="8"><path d="M0 0v8l5-4z" fill="#333" /></svg></ScrollEnd>
            </HScroll>
            <Icon name="pageNote" size={17} />
          </HRow>
          <ViewBar>
            <ViewGroup>
              <Tool name="closePane" /><Tool name="splitV" /><Tool name="splitH" />
              <Gap $w={23} />
              <Tool name="fitPage" /><Tool name="fitWidth" />
            </ViewGroup>
            <ViewGroup>
              <Tool name="hand" $active /><Tool name="pointer" /><Tool name="magnifier" /><Tool name="textSelect" />
              <Gap $w={3} />
              <Combo label="Zoom" value="96.89%" width={73} size={10} />
              <Gap $w={23} />
              <Tool name="first" /><Tool name="prev" />
              <Gap $w={2} />
              <Combo label="Page" value="A 201_CONSTRUCTION PLAN - LEVEL 01" width={264} size={10} />
              <Tool name="next" /><Tool name="last" />
            </ViewGroup>
            <ViewGroup $end>
              <Tool name="person" /><CaretButton aria-label="Profile list"><Caret /></CaretButton>
              <Tool name="bulb" /><CaretButton aria-label="Dimmer list"><Caret /></CaretButton>
              <Tool name="pDoc" /><Tool name="lock" /><CaretButton aria-label="Lock list"><Caret /></CaretButton>
            </ViewGroup>
          </ViewBar>
          <BottomRail>
            <svg width="5" height="7"><path d="M0 0v7l4-3.5z" fill="#fff" /></svg>
            <PanelHandle $side="bottom" aria-label="Bottom panel" />
            <svg width="5" height="7"><path d="M0 0v7l4-3.5z" fill="#fff" /></svg>
          </BottomRail>
        </DocPane>
        <Rail><PanelHandle $side="right" aria-label="Right panel" /></Rail>
        <SidePanel>
          {sideTools.map((group, i) => (
            <React.Fragment key={i}>
              <SideGrip />
              {group.map((n) => <SideButton key={n} aria-label={n}><Icon name={n} size={18} /></SideButton>)}
            </React.Fragment>
          ))}
        </SidePanel>
      </Workspace>

      <StatusBar>
        <Hint>Drag control points to resize, or drag text box to move. Double click to edit text</Hint>
        <StatusMode>C</StatusMode>
        <StatusDrop>c <Caret /></StatusDrop>
        <PageSize>42.00 x 30.00 in</PageSize>
        <Position>(28.43, 19.04)</Position>
      </StatusBar>

      <ContextMenu />
    </Page>
  );
};

/* ---------- styles ---------- */

const GlobalStyle = createGlobalStyle`
  body {
    margin: 0;
    background: ${DARK};
    overflow: hidden;
  }
  *, *::before, *::after {
    box-sizing: border-box;
  }
  button, select {
    font: inherit;
    color: inherit;
    background: none;
    border: 0;
    padding: 0;
    margin: 0;
  }
`
const Page = styled.div`
  position: relative;
  height: 100vh;
  display: flex;
  flex-direction: column;
  background: ${DARK};
  color: #f2f2f2;
  font-family: 'Noto Sans', 'Open Sans', sans-serif;
  font-size: 11px;
  line-height: 16px;
`
const Svg = styled.svg`
  display: block;
  flex: none;
  overflow: visible;
`
const HiddenSvg = styled.svg`
  position: absolute;
`
const MenuBar = styled.nav`
  display: flex;
  height: 24px;
  background: #000;
`
const Logo = styled.div`
  width: 47px;
  padding-left: 13px;
  font-family: 'Liberation Serif', serif;
  font-style: italic;
  font-weight: 700;
  font-size: 13px;
  line-height: 24px;
`
const MenuButton = styled.button`
  padding: 0 14px;
  line-height: 24px;
  background: ${({ $active }) => ($active ? DARK : 'none')};
`
const WindowButtons = styled.div`
  display: flex;
  align-items: center;
  gap: 12px;
  margin-left: auto;
  padding-right: 6px;
`
const WindowButton = styled.button`
  display: flex;
  &:first-child {
    margin-right: 4px;
  }
`
const BigBar = styled.div`
  display: flex;
  height: 66px;
  padding-right: 3px;
`
const ProfileButton = styled.button`
  display: grid;
  place-items: center;
  width: 36px;
  height: 58px;
`
const BigGroup = styled.div`
  display: flex;
  margin-left: ${({ $end }) => ($end ? 'auto' : '45px')};
`
const BigButton = styled.button`
  display: flex;
  flex-direction: column;
  align-items: center;
  width: ${({ $width }) => $width}px;
  padding-top: 10px;
  font-family: 'Liberation Sans', Arial, sans-serif;
  font-size: 10px;
  line-height: 14px;
`
const BigFace = styled.span`
  display: flex;
  align-items: center;
  gap: ${({ $gap }) => $gap}px;
  margin-bottom: 5px;
`
const Caret = styled.span`
  flex: none;
  border: 3px solid transparent;
  border-top-color: ${({ $dark, $dim }) => ($dark ? '#111' : $dim ? '#666' : '#fff')};
  border-bottom: 0;
`
const SmallBar = styled.div`
  display: flex;
  align-items: center;
  height: 30px;
  padding-left: 3px;
`
const Grip = styled.span`
  flex: none;
  width: 3px;
  height: 17px;
  margin: 0 3px 0 6px;
  background: repeating-linear-gradient(#ddd 0 2px, transparent 2px 5px);
  &:first-child {
    margin-left: 3px;
  }
`
const ToolButton = styled.button`
  display: grid;
  place-items: center;
  flex: none;
  width: 24px;
  height: 24px;
  ${({ $active }) => $active && css`
    background: #34414d;
    border: 1px solid #3c7eb0;
  `}
`
const CaretButton = styled.button`
  display: grid;
  place-items: center;
  flex: none;
  width: 12px;
  height: 24px;
`
const DropButton = styled.button`
  display: flex;
  align-items: center;
  flex: none;
  gap: 3px;
  width: 33px;
  height: 24px;
  padding-left: 3px;
`
const LineSample = styled.button`
  flex: none;
  width: 62px;
  height: 2px;
  margin: 0 6px 0 5px;
  background: ${BLUE};
`
const ComboBox = styled.div`
  display: flex;
  flex: none;
  width: ${({ $width }) => $width}px;
  height: 19px;
  margin-right: 2px;
  background: #fcfcfc;
  color: #111;
`
const ComboSelect = styled.select`
  appearance: none;
  flex: 1;
  min-width: 0;
  padding: 0 4px;
  border-radius: 0;
  font-family: 'Liberation Sans', Arial, sans-serif;
  font-size: ${({ $size }) => $size}px;
`
const ComboArrow = styled.span`
  display: grid;
  place-items: center;
  width: 12px;
  background: #a9abae;
`
const Divider = styled.span`
  flex: none;
  width: 1px;
  height: 16px;
  margin: 0 3px 0 2px;
  background: #aaa;
`
const Letter = styled.span`
  color: ${BLUE};
  font-family: ${({ $italic }) => ($italic ? "'Liberation Serif', serif" : "Roboto, sans-serif")};
  font-size: 17px;
  line-height: 20px;
  font-weight: ${({ $bold }) => ($bold ? 900 : 400)};
  font-style: ${({ $italic }) => ($italic ? 'italic' : 'normal')};
  text-decoration: ${({ $underline }) => ($underline ? 'underline' : 'none')};
`
const Workspace = styled.div`
  display: flex;
  flex: 1;
  min-height: 0;
`
const Rail = styled.div`
  position: relative;
  flex: none;
  width: 7px;
  margin-top: 7px;
  background: ${RAIL};
`
const handlePlaces = {
  left: 'left: 0; top: calc(50% - 17px); width: 14px; height: 28px; border-radius: 0 14px 14px 0;',
  right: 'right: 0; top: calc(50% - 17px); width: 14px; height: 28px; border-radius: 14px 0 0 14px;',
  bottom: 'bottom: 0; left: calc(50% - 14px); width: 28px; height: 14px; border-radius: 14px 14px 0 0;',
}
const PanelHandle = styled.button`
  position: absolute;
  z-index: 1;
  background: radial-gradient(circle, #fff 3px, #0f86dc 4px);
  ${({ $side }) => handlePlaces[$side]}
`
const DocPane = styled.main`
  display: flex;
  flex-direction: column;
  flex: 1;
  min-width: 0;
  padding-top: 7px;
`
const TabBar = styled.div`
  display: flex;
  height: 28px;
`
const Tab = styled.button`
  display: flex;
  align-items: center;
  justify-content: space-between;
  flex: none;
  width: ${({ $width }) => $width}px;
  padding: 0 4px 0 9px;
  background: ${({ $active }) => ($active ? '#3b3b3b' : '#000')};
  font-size: ${({ $active }) => ($active ? 13 : 11)}px;
  font-weight: ${({ $active }) => ($active ? 700 : 400)};
  white-space: nowrap;
`
const TabActions = styled.div`
  display: flex;
  align-items: center;
  margin-left: auto;
`
const FlagBox = styled.div`
  display: grid;
  place-items: center;
  align-self: flex-start;
  width: 17px;
  height: 24px;
  margin-left: 3px;
  background: ${RAIL};
`
const Sheet = styled.div`
  display: flex;
  flex: 1;
  min-height: 0;
`
const SheetMain = styled.div`
  display: flex;
  flex-direction: column;
  flex: 1;
  min-width: 0;
`
const SheetRow = styled.div`
  display: flex;
  flex: 1;
  min-height: 0;
`
const rulerText = css`
  display: block;
  flex: none;
  background: #5f5f5f;
  overflow: hidden;
  text {
    fill: #eee;
    font-family: 'Liberation Sans', Arial, sans-serif;
    font-size: 8px;
  }
`
const TopRulerSvg = styled.svg`
  ${rulerText}
  width: 100%;
  height: 13px;
`
const LeftRulerSvg = styled.svg`
  ${rulerText}
  width: 13px;
  height: 100%;
`
const PlanSvg = styled.svg`
  display: block;
  flex: 1;
  min-width: 0;
  height: 100%;
  background: #fdfdfd;
  font-family: 'Liberation Sans', Arial, sans-serif;
`
const VScroll = styled.div`
  display: flex;
  flex-direction: column;
  flex: none;
  width: 17px;
  background: #ececec;
`
const HRow = styled.div`
  display: flex;
  flex: none;
  height: 17px;
`
const HScroll = styled.div`
  display: flex;
  flex: 1;
  background: #ececec;
`
const ScrollEnd = styled.button`
  display: grid;
  place-items: center;
  flex: none;
  width: 17px;
  height: 17px;
`
const Space = styled.div`
  flex: ${({ $grow }) => $grow} 0 0;
`
const Thumb = styled.div`
  display: grid;
  place-items: center;
  flex: ${({ $grow }) => $grow} 0 0;
  margin: 1px;
  border: 1px solid #999;
  border-radius: 1px;
  background: linear-gradient(${({ $vertical }) => ($vertical ? 'to right' : 'to bottom')}, #f4f4f4, #bdbdbd);
`
const GripLines = styled.span`
  width: 7px;
  height: 9px;
  background: repeating-linear-gradient(#555 0 1px, transparent 1px 2px);
`
const ViewBar = styled.div`
  display: grid;
  grid-template-columns: 1fr auto 1fr;
  flex: none;
  height: 27px;
`
const ViewGroup = styled.div`
  display: flex;
  align-items: center;
  justify-content: ${({ $end }) => ($end ? 'flex-end' : 'flex-start')};
  padding-right: ${({ $end }) => ($end ? 3 : 0)}px;
`
const Gap = styled.span`
  width: ${({ $w }) => $w}px;
`
const BottomRail = styled.div`
  position: relative;
  display: flex;
  align-items: center;
  justify-content: space-between;
  flex: none;
  height: 7px;
  padding-right: 6px;
  background: ${RAIL};
`
const SidePanel = styled.aside`
  display: flex;
  flex-direction: column;
  align-items: center;
  flex: none;
  width: 26px;
  padding-right: 2px;
  overflow: hidden;
`
const SideGrip = styled.span`
  flex: none;
  width: 15px;
  height: 3px;
  margin: 5px 0 3px;
  background: repeating-linear-gradient(to right, #ddd 0 3px, transparent 3px 4px);
`
const SideButton = styled.button`
  display: grid;
  place-items: center;
  flex: none;
  width: 24px;
  height: 27px;
`
const StatusBar = styled.footer`
  display: flex;
  align-items: center;
  flex: none;
  height: 26px;
  padding-left: 5px;
  border-bottom: 1px solid #8a8a8a;
`
const Hint = styled.span`
  flex: 1;
  white-space: nowrap;
`
const StatusMode = styled.span`
  width: 238px;
`
const StatusDrop = styled.button`
  display: flex;
  align-items: center;
  gap: 8px;
  width: 53px;
`
const PageSize = styled.span`
  width: 140px;
`
const Position = styled.span`
  width: 114px;
`
const Menu = styled.div`
  position: absolute;
  z-index: 2;
  left: 739px;
  top: 119px;
  width: 231px;
  padding: 1px;
  background: ${DARK};
  border: 1px solid #33769f;
`
const MenuGroup = styled.div`
  & + &::before {
    content: '';
    display: block;
    height: 1px;
    margin: 3px 0 2px 35px;
    background: #c8c8c8;
  }
`
const MenuItem = styled.button`
  display: flex;
  align-items: center;
  position: relative;
  width: 100%;
  height: 26px;
  padding-right: 30px;
  background: ${({ $active }) => ($active ? '#0f87d6' : 'none')};
  color: ${({ disabled }) => (disabled ? '#5e5e5e' : '#f4f4f4')};
`
const MenuIcon = styled.span`
  width: 38px;
  padding-left: 3px;
`
const Keys = styled.span`
  margin-left: auto;
`
const SubArrow = styled.span`
  position: absolute;
  right: 9px;
  border: 4px solid transparent;
  border-left-color: #fff;
  border-right: 0;
`
const Cursor = styled.svg`
  position: absolute;
  left: 30px;
  top: 358px;
`
